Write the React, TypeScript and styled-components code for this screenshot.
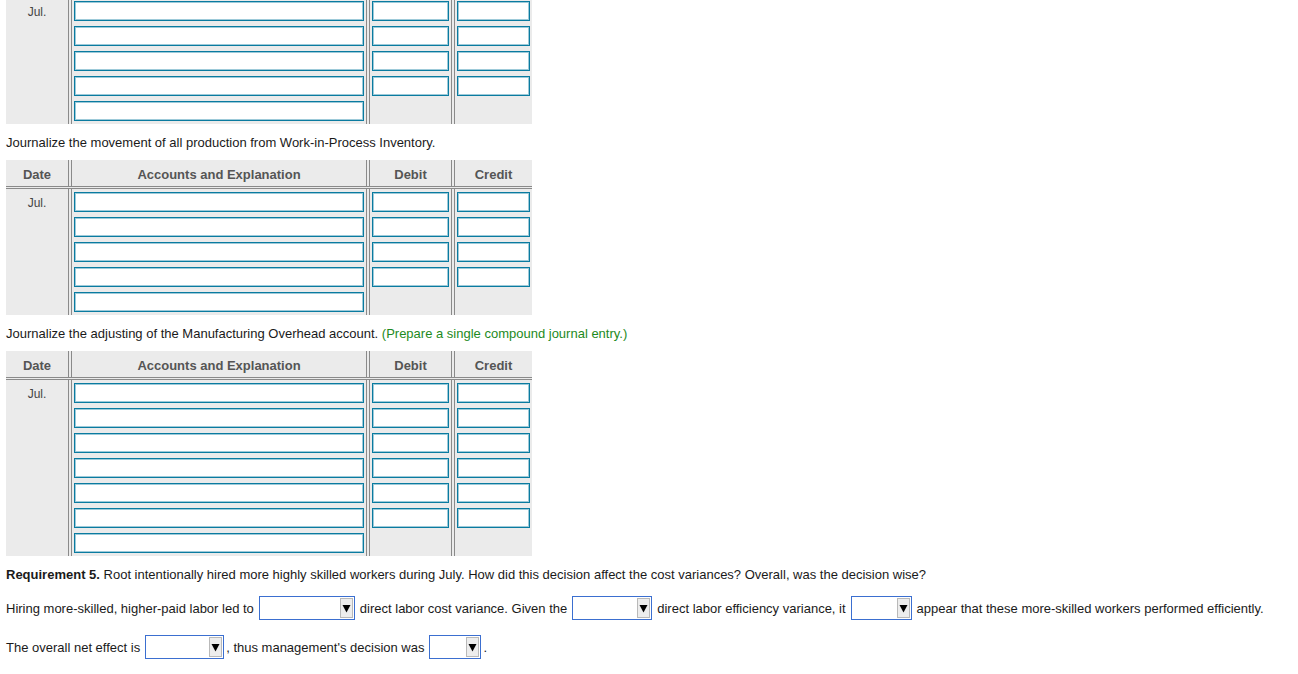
import styled, { createGlobalStyle } from "styled-components";

const GlobalStyle = createGlobalStyle`
    html, body {
        margin: 0;
        padding: 0;
        background: #fff;
    }
    body {
        font-family: "Liberation Sans", Arial, sans-serif;
        font-size: 13px;
        color: #1a1a1a;
        overflow: hidden;
    }
`;

const Page = styled.div`
    padding-left: 6px;
    width: 1292px;
`;

const Section = styled.section<{ $cropped?: boolean }>`
    margin-top: ${props => (props.$cropped ? "-2px" : "0")};
`;

const Prompt = styled.p`
    margin: 11px 0 10px;
    line-height: 15px;
`;

const Hint = styled.span`
    color: #1d8a22;
`;

const COLS = "62px 298px 85px 81px";
const RULE = "#8a8a8a";

const Table = styled.div`
    width: 526px;
    background: #ebebeb;
`;

const HeadRow = styled.div`
    display: grid;
    grid-template-columns: ${COLS};
    height: 26px;
    border-bottom: 3px double ${RULE};
`;

const HeadCell = styled.div<{ $divider?: boolean }>`
    display: flex;
    align-items: center;
    justify-content: center;
    padding-top: 2px;
    font-weight: bold;
    color: #555;
    border-left: ${props => (props.$divider ? `4px double ${RULE}` : "none")};
`;

const BodyRow = styled.div`
    display: grid;
    grid-template-columns: ${COLS};
`;

const DateCell = styled.div`
    padding-top: 7px;
    text-align: center;
    line-height: 14px;
    font-size: 12px;
    color: #444;
`;

const InputCell = styled.div`
    display: flex;
    flex-direction: column;
    gap: 5px;
    padding: 3px 2px;
    border-left: 4px double ${RULE};
`;

const EntryInput = styled.input`
    box-sizing: border-box;
    display: block;
    width: 100%;
    height: 20px;
    margin: 0;
    padding: 0 3px;
    border: 1px solid #0a7ba0;
    box-shadow: inset 0 0 0 1px rgba(10, 123, 160, 0.4);
    background: #fff;
    font: inherit;
    outline: none;
`;

const Requirement = styled.p`
    margin: 11px 0 0;
    line-height: 15px;
`;

const AnswerRow = styled.div<{ $gap: number }>`
    display: flex;
    align-items: center;
    height: 24px;
    margin-top: ${props => props.$gap}px;
    white-space: pre;
`;

const Select = styled.div<{ $w: number; $tight?: boolean }>`
    box-sizing: border-box;
    display: flex;
    justify-content: flex-end;
    align-items: center;
    width: ${props => props.$w}px;
    height: 24px;
    margin: ${props => (props.$tight ? "0 2px 0 5px" : "0 5px 0 5px")};
    padding-right: 1px;
    border: 1px solid #3b6fd0;
    background: #fff;
`;

const ArrowButton = styled.span`
    box-sizing: border-box;
    display: flex;
    align-items: center;
    justify-content: center;
    width: 13px;
    height: 20px;
    background: #ededed;
    border: 1px solid #b9b9b9;
`;

interface JournalProps {
    accountRows: number;
    amountRows: number;
    showHead?: boolean;
}

function Journal({ accountRows, amountRows, showHead = true }: JournalProps) {
    const accounts = Array.from({ length: accountRows });
    const amounts = Array.from({ length: amountRows });
    return (
        <Table>
            {showHead && (
                <HeadRow>
                    <HeadCell>Date</HeadCell>
                    <HeadCell $divider>Accounts and Explanation</HeadCell>
                    <HeadCell $divider>Debit</HeadCell>
                    <HeadCell $divider>Credit</HeadCell>
                </HeadRow>
            )}
            <BodyRow>
                <DateCell>Jul.</DateCell>
                <InputCell>
                    {accounts.map((_, i) => <EntryInput key={i} type="text" />)}
                </InputCell>
                <InputCell>
                    {amounts.map((_, i) => <EntryInput key={i} type="text" />)}
                </InputCell>
                <InputCell>
                    {amounts.map((_, i) => <EntryInput key={i} type="text" />)}
                </InputCell>
            </BodyRow>
        </Table>
    );
}

function Dropdown({ width, tight }: { width: number; tight?: boolean }) {
    return (
        <Select $w={width} $tight={tight}>
            <ArrowButton>
                <svg width="9" height="9" viewBox="0 0 9 9">
                    <polygon points="0.5,1 8.5,1 4.5,8.5" fill="#000" />
                </svg>
            </ArrowButton>
        </Select>
    );
}

export default function App() {
    return (
        <Page>
            <GlobalStyle />
            {/* the first journal is scrolled so that only its body shows */}
            <Section $cropped>
                <Journal accountRows={5} amountRows={4} showHead={false} />
            </Section>

            <Section>
                <Prompt>Journalize the movement of all production from Work-in-Process Inventory.</Prompt>
                <Journal accountRows={5} amountRows={4} />
            </Section>

            <Section>
                <Prompt>
                    Journalize the adjusting of the Manufacturing Overhead account.{" "}
                    <Hint>(Prepare a single compound journal entry.)</Hint>
                </Prompt>
                <Journal accountRows={7} amountRows={6} />
            </Section>

            <Requirement>
                <b>Requirement 5.</b> Root intentionally hired more highly skilled workers during July. How did this
                decision affect the cost variances? Overall, was the decision wise?
            </Requirement>
            <AnswerRow $gap={14}>
                Hiring more-skilled, higher-paid labor led to
                <Dropdown width={96} />
                direct labor cost variance. Given the
                <Dropdown width={80} />
                direct labor efficiency variance, it
                <Dropdown width={61} />
                appear that these more-skilled workers performed efficiently.
            </AnswerRow>
            <AnswerRow $gap={15}>
                The overall net effect is
                <Dropdown width={79} tight />
                , thus management's decision was
                <Dropdown width={52} tight />
                .
            </AnswerRow>
        </Page>
    );
}
